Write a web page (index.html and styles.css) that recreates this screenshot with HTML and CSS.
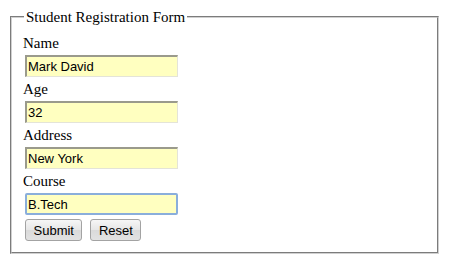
FILE: index.html
```html
<!DOCTYPE html>
<html>
<head>
<meta charset="utf-8">
<title>Student Registration Form</title>
<link rel="stylesheet" href="styles.css">
</head>
<body>
<form class="reg-form">
  <fieldset class="reg-fieldset">
    <legend class="reg-legend">Student Registration Form</legend>
    <label class="field-label" for="name">Name</label>
    <input class="field-input" id="name" type="text" value="Mark David">
    <label class="field-label" for="age">Age</label>
    <input class="field-input" id="age" type="text" value="32">
    <label class="field-label" for="address">Address</label>
    <input class="field-input" id="address" type="text" value="New York">
    <label class="field-label" for="course">Course</label>
    <input class="field-input is-focused" id="course" type="text" value="B.Tech">
    <div class="button-row">
      <button class="btn" type="submit">Submit</button>
      <button class="btn" type="reset">Reset</button>
    </div>
  </fieldset>
</form>
</body>
</html>
```

FILE: styles.css
```css
html, body {
  background: #ffffff;
}
body {
  margin: 8px;
  font-family: "Liberation Serif", "Times New Roman", serif;
  font-size: 15px;
  color: #000;
}
.reg-form {
  margin: 0;
}
.reg-fieldset {
  margin: 0 2px;
  width: 401px;
  padding: 8px 12px 11px 12px;
  border: 2px groove #d0d0d0;
  display: flex;
  flex-direction: column;
  align-items: flex-start;
}
.reg-legend {
  padding: 0 2px;
  font-size: 15px;
  line-height: 18px;
}
.field-label {
  display: block;
  font-size: 15px;
  line-height: 18px;
  margin: 0 0 3px -1px;
}
.field-input {
  box-sizing: border-box;
  width: 153px;
  height: 22px;
  margin: 0 0 3px 1px;
  padding: 0 1px;
  font-family: "Liberation Sans", Arial, sans-serif;
  font-size: 13px;
  color: #000;
  background: #ffffc0;
  border-style: solid;
  border-width: 2px 1px 1px 2px;
  border-color: #9a9a8c #e4e4d8 #e4e4d8 #9a9a8c;
  outline: none;
}
.field-input.is-focused {
  border: 2px solid #8aaedb;
  border-radius: 2px;
}
.button-row {
  display: flex;
  gap: 8px;
  margin: 1px 0 0 1px;
}
.btn {
  box-sizing: border-box;
  height: 22px;
  padding: 0 7.5px;
  font-family: "Liberation Sans", Arial, sans-serif;
  font-size: 13px;
  color: #000;
  background: linear-gradient(#f6f6f6, #e6e6e6 50%, #dadada 51%, #e2e2e2);
  border: 1px solid #a3a3a3;
  border-radius: 3px;
}
```
